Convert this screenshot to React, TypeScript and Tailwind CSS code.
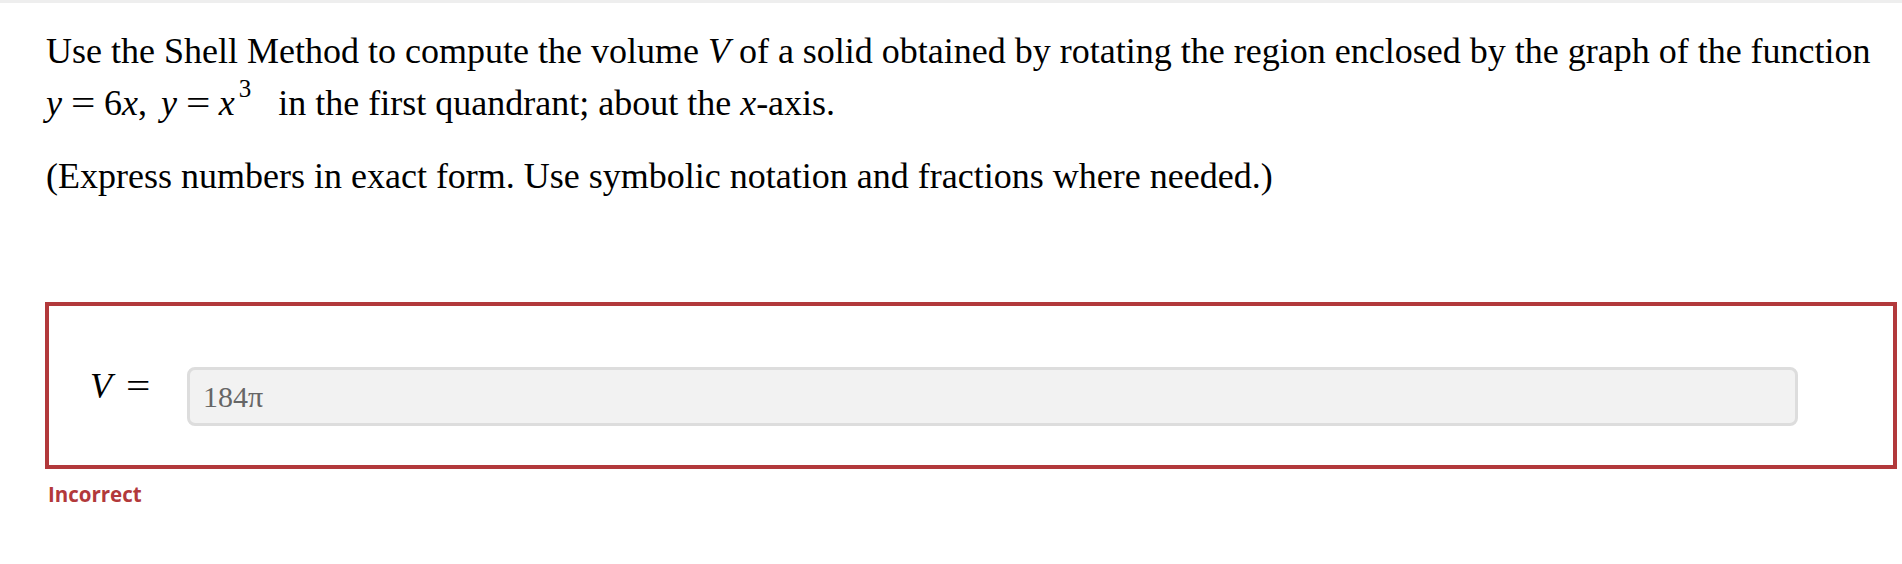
import React from "react";

const serif = { fontFamily: '"Liberation Serif", "Times New Roman", serif' };

function MI({ children }: { children: React.ReactNode }) {
  return <span className="italic">{children}</span>;
}

function Rel({ children }: { children: React.ReactNode }) {
  return <span className="inline-block mx-[0.3em] scale-x-[1.2]">{children}</span>;
}

export default function App() {
  return (
    <div className="w-full min-h-[564px] bg-white">
      <div className="h-[3px] bg-[#eeeeee]" />
      <div className="pl-[45px] pr-[5px] pt-[22px]">
        <div style={serif} className="text-[36px] leading-[52px] text-black pl-[1px]">
          <p>
            Use the Shell Method to compute the volume <MI>V</MI> of a solid obtained by rotating the region enclosed by the graph of the function
            <br />
            <MI>y</MI>
            <Rel>=</Rel>
            <span>6</span>
            <MI>x</MI>
            <span className="mr-[5px]">,</span> <MI>y</MI>
            <Rel>=</Rel>
            <MI>x</MI>
            <span className="inline-block text-[25px] leading-[25px] align-top relative top-[-1px] ml-[4px] mr-[18px]">3</span> in the first quandrant; about the <MI>x</MI>-axis.
          </p>
          <p className="mt-[21px]">
            (Express numbers in exact form. Use symbolic notation and fractions where needed.)
          </p>
        </div>

        <div className="mt-[100px] border-[4px] border-[#b2393b] flex items-start pt-[61px] pb-[39px] pl-[40px] pr-[95px]">
          <div style={serif} className="w-[98px] shrink-0 text-[36px] leading-[36px] text-black mt-[1px] pl-[1px]">
            <MI>V</MI>
            <span className="inline-block ml-[16px] scale-x-[1.2]">=</span>
          </div>
          <div
            style={serif}
            className="flex-1 h-[59px] border-[3px] border-[#dddddd] bg-[#f2f2f2] rounded-[8px] pl-[13px] flex items-center text-[30px] text-[#666666]"
          >
            184π
          </div>
        </div>

        <div
          style={{ fontFamily: '"Open Sans", sans-serif' }}
          className="mt-[11px] ml-[3px] text-[#b2393b] font-bold text-[20.5px] leading-[28px]"
        >
          Incorrect
        </div>
      </div>
    </div>
  );
}
